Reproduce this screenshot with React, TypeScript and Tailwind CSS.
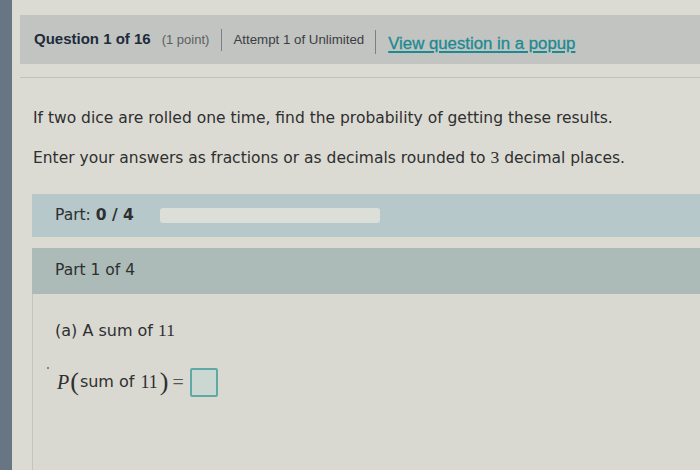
const sans = { fontFamily: '"Liberation Sans", Arial, sans-serif' };

const App = () => {
  return (
    <div className="flex h-[470px] w-[700px] overflow-hidden bg-[#dcdbd3] text-[#2e2f30] font-['DejaVu_Sans',Verdana,sans-serif]">
      <div className="w-[12px] shrink-0 bg-[#687684]" />
      <div className="flex flex-1 flex-col">
        {/* header */}
        <div className="ml-[8px] mt-[15px] flex h-[49px] items-center bg-[#c2c4c1] pl-[14px]" style={sans}>
          <span className="text-[15px] font-bold text-[#1d2b3a]">Question 1 of 16</span>
          <span className="ml-[11px] text-[13px] text-[#5b5f63]">(1 point)</span>
          <span className="ml-[12px] h-[22px] w-px bg-[#7c8084]" />
          <span className="ml-[11px] text-[13.3px] text-[#3a3e42]">Attempt 1 of Unlimited</span>
          <span className="ml-[11px] mt-[4px] h-[24px] w-px bg-[#7c8084]" />
          <a
            href="#"
            className="ml-[12px] mt-[8px] text-[16.8px] text-[#1b8a93] underline decoration-2 underline-offset-2 [-webkit-text-stroke:0.3px_#1b8a93]"
          >
            View question in a popup
          </a>
        </div>
        <div className="ml-[8px] mt-[13px] h-px bg-[#c2c2ba]" />

        {/* question text */}
        <div className="flex flex-col gap-[21px] pl-[21px] pt-[31px] text-[15.5px] leading-[18px]">
          <p>If two dice are rolled one time, find the probability of getting these results.</p>
          <p>
            Enter your answers as fractions or as decimals rounded to{" "}
            <span className="font-['Liberation_Serif',serif] text-[17.5px]">3</span> decimal places.
          </p>
        </div>

        {/* progress */}
        <div className="ml-[20px] mt-[27px] flex h-[43px] items-center bg-[#b7c8ca] pl-[23px]">
          <span className="text-[15.5px]">
            Part: <span className="font-bold">0 / 4</span>
          </span>
          <div className="ml-[26px] h-[15px] w-[220px] rounded-[3px] bg-[#dcdfd8]" />
        </div>

        {/* part header */}
        <div className="ml-[20px] mt-[11px] flex h-[46px] items-center bg-[#acbbb8] pl-[23px] text-[15.5px]">
          Part 1 of 4
        </div>

        {/* part body */}
        <div className="ml-[20px] flex flex-1 flex-col border-l border-[#c4c4bc] bg-[#d9d9d1] pl-[22px] pt-[26px]">
          <p className="text-[16px] leading-[20px]">
            (a) A sum of <span className="font-['Liberation_Serif',serif] text-[17.5px]">11</span>
          </p>
          <div className="relative mt-[26px] flex items-center">
            <span className="absolute left-[-8px] top-[0px] h-[2px] w-[2px] rounded-full bg-[#6b6b6b]" />
            <span className="ml-[2px] font-['Liberation_Serif',serif] text-[20px] italic">P</span>
            <span className="ml-[1px] font-['Liberation_Serif',serif] text-[26px] leading-[24px]">(</span>
            <span className="ml-[1px] text-[16px]">sum of</span>
            <span className="ml-[6px] font-['Liberation_Serif',serif] text-[18px]">11</span>
            <span className="ml-[2px] font-['Liberation_Serif',serif] text-[26px] leading-[24px]">)</span>
            <span className="ml-[4px] font-['Liberation_Serif',serif] text-[20px] text-[#555]">=</span>
            <span className="ml-[6px] h-[29px] w-[28px] rounded-[2px] border-2 border-[#5fa9a5] bg-[#cbd8d2]" />
          </div>
        </div>
      </div>
    </div>
  );
};

export default App;
